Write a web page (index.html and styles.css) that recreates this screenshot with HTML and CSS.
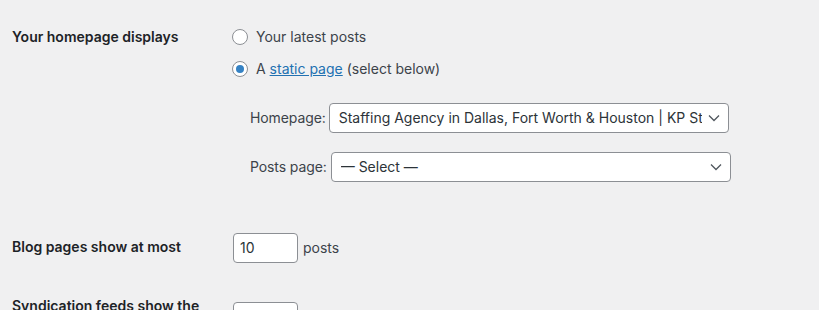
FILE: index.html
```html
<!DOCTYPE html>
<html lang="en">
<head>
<meta charset="utf-8">
<title>Reading Settings</title>
<link rel="stylesheet" href="styles.css">
</head>
<body>
<div class="form-table">
  <div class="row row-front">
    <div class="th">Your homepage displays</div>
    <div class="td">
      <div class="options">
        <label class="option"><span class="radio"></span><span>Your latest posts</span></label>
        <label class="option"><span class="radio checked"></span><span>A <a href="#" class="link">static page</a> (select below)</span></label>
      </div>
      <div class="page-selects">
        <div class="page-select">
          <span class="select-label">Homepage:</span>
          <div class="select">
            <span class="select-text">Staffing Agency in Dallas, Fort Worth &amp; Houston | KP Staffing</span>
            <svg class="chevron" width="12" height="8" viewBox="0 0 12 8"><path d="M1 1.5 L6 6.5 L11 1.5" fill="none" stroke="#50575e" stroke-width="1.3"/></svg>
          </div>
        </div>
        <div class="page-select">
          <span class="select-label">Posts page:</span>
          <div class="select">
            <span class="select-text">— Select —</span>
            <svg class="chevron" width="12" height="8" viewBox="0 0 12 8"><path d="M1 1.5 L6 6.5 L11 1.5" fill="none" stroke="#50575e" stroke-width="1.3"/></svg>
          </div>
        </div>
      </div>
    </div>
  </div>
  <div class="row row-blog">
    <div class="th">Blog pages show at most</div>
    <div class="td inline">
      <div class="input">10</div>
      <span class="unit">posts</span>
    </div>
  </div>
  <div class="row row-feed">
    <div class="th">Syndication feeds show the most recent</div>
    <div class="td inline">
      <div class="input">10</div>
      <span class="unit">items</span>
    </div>
  </div>
</div>
</body>
</html>
```
FILE: styles.css
```css
html, body {
  margin: 0;
  padding: 0;
  background: #f0f0f1;
}
body {
  font-family: Inter, "Noto Sans", "Liberation Sans", sans-serif;
  font-size: 14px;
  color: #3c434a;
  overflow: hidden;
  height: 310px;
}
.form-table {
  padding-left: 12px;
}
.row {
  display: flex;
  align-items: flex-start;
}
.th {
  width: 200px;
  padding-right: 10px;
  font-weight: 600;
  color: #1d2327;
  line-height: 20px;
  flex-shrink: 0;
}
.td {
  padding-left: 10px;
  line-height: 20px;
}
.row-front {
  padding-top: 27px;
}
.options {
  display: flex;
  flex-direction: column;
  gap: 12px;
}
.option {
  display: flex;
  align-items: center;
  gap: 8px;
}
.radio {
  width: 16px;
  height: 16px;
  box-sizing: border-box;
  border: 1px solid #8c8f94;
  border-radius: 50%;
  background: #fff;
  display: flex;
  align-items: center;
  justify-content: center;
}
.radio.checked::after {
  content: "";
  width: 8px;
  height: 8px;
  border-radius: 50%;
  background: #3582c4;
}
.link {
  color: #2271b1;
  text-decoration: underline;
}
.page-selects {
  display: flex;
  flex-direction: column;
  gap: 19px;
  padding-top: 24px;
  padding-left: 18px;
}
.page-select {
  display: flex;
  align-items: center;
  gap: 3px;
}
.page-select:last-child {
  gap: 4px;
}
.select-label {
  color: #3c434a;
  letter-spacing: -0.1px;
}
.select {
  width: 400px;
  height: 30px;
  box-sizing: border-box;
  border: 1px solid #8c8f94;
  border-radius: 4px;
  background: #fff;
  display: flex;
  align-items: center;
  padding: 0 8px 0 9px;
  gap: 6px;
  color: #2c3338;
}
.select-text {
  flex: 1;
  overflow: hidden;
  white-space: nowrap;
}
.chevron {
  flex-shrink: 0;
}
.row-blog {
  margin-top: 51px;
}
.row-blog .th {
  padding-top: 4px;
}
.inline {
  display: flex;
  align-items: center;
  gap: 5px;
}
.input {
  width: 65px;
  height: 30px;
  box-sizing: border-box;
  border: 1px solid #8c8f94;
  border-radius: 4px;
  background: #fff;
  padding: 0 6px;
  margin-left: 1px;
  display: flex;
  align-items: center;
  color: #2c3338;
}
.row-feed {
  margin-top: 33px;
}
.row-feed .td {
  padding-top: 6px;
}
```
